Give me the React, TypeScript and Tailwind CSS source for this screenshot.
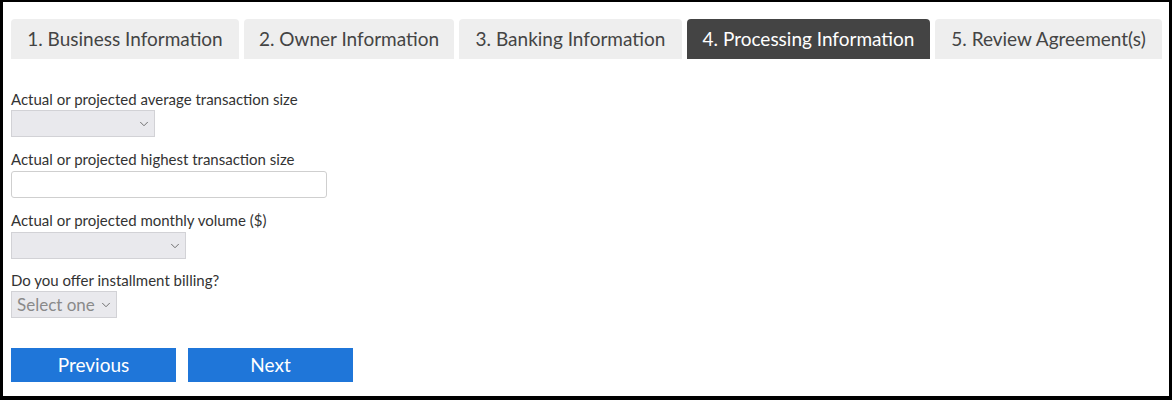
import { ChevronDown } from 'lucide-react';

const tabs = [
  { label: '1. Business Information', w: 'w-[228px]' },
  { label: '2. Owner Information', w: 'w-[210px]' },
  { label: '3. Banking Information', w: 'w-[223px]' },
  { label: '4. Processing Information', w: 'w-[243px]', active: true },
  { label: '5. Review Agreement(s)', w: 'w-[227px]' },
];

const Select = ({ width, text }: { width: string; text?: string }) => (
  <div className={`relative h-[27px] ${width}`}>
    <select
      className="appearance-none w-full h-full bg-[#e9e9ed] border border-[#d2d2d6] rounded-none pl-[5px] text-[17px] text-[#8a8a8a] outline-none"
      defaultValue=""
    >
      <option value="">{text ?? ''}</option>
    </select>
    <ChevronDown
      size={14}
      strokeWidth={1.6}
      className="absolute right-[4px] top-[7px] text-[#666] pointer-events-none"
    />
  </div>
);

export default function App() {
  return (
    <div
      className="w-[1172px] h-[400px] bg-white border-solid border-black border-t-2 border-l-[3px] border-r-[3px] border-b-4 pl-2 pt-[17px]"
      style={{ fontFamily: 'Lato, "Open Sans", sans-serif' }}
    >
      <div className="flex gap-[5px]">
        {tabs.map(t => (
          <div
            key={t.label}
            className={`${t.w} h-10 pt-px rounded-t flex items-center justify-center text-[19px] ${
              t.active ? 'bg-[#444444] text-white' : 'bg-[#eeeeee] text-[#444444]'
            }`}
          >
            {t.label}
          </div>
        ))}
      </div>

      <div className="mt-[31px] text-[#333] text-[15px]">
        <label className="block leading-[18px] h-5">Actual or projected average transaction size</label>
        <Select width="w-[144px]" />

        <label className="block leading-[18px] h-5 mt-[13px]">Actual or projected highest transaction size</label>
        <input
          type="text"
          className="block mt-px w-[316px] h-[27px] border border-[#cfcfcf] rounded-[3px] outline-none px-2"
        />

        <label className="block leading-[18px] h-5 mt-[13px]">Actual or projected monthly volume ($)</label>
        <div className="mt-px">
          <Select width="w-[175px]" />
        </div>

        <label className="block leading-[18px] h-5 mt-3">Do you offer installment billing?</label>
        <Select width="w-[106px]" text="Select one" />

        <div className="flex gap-3 mt-[30px]">
          <button className="w-[165px] h-[34px] bg-[#1f76d9] text-white text-[19px]">Previous</button>
          <button className="w-[165px] h-[34px] bg-[#1f76d9] text-white text-[19px]">Next</button>
        </div>
      </div>
    </div>
  );
}
